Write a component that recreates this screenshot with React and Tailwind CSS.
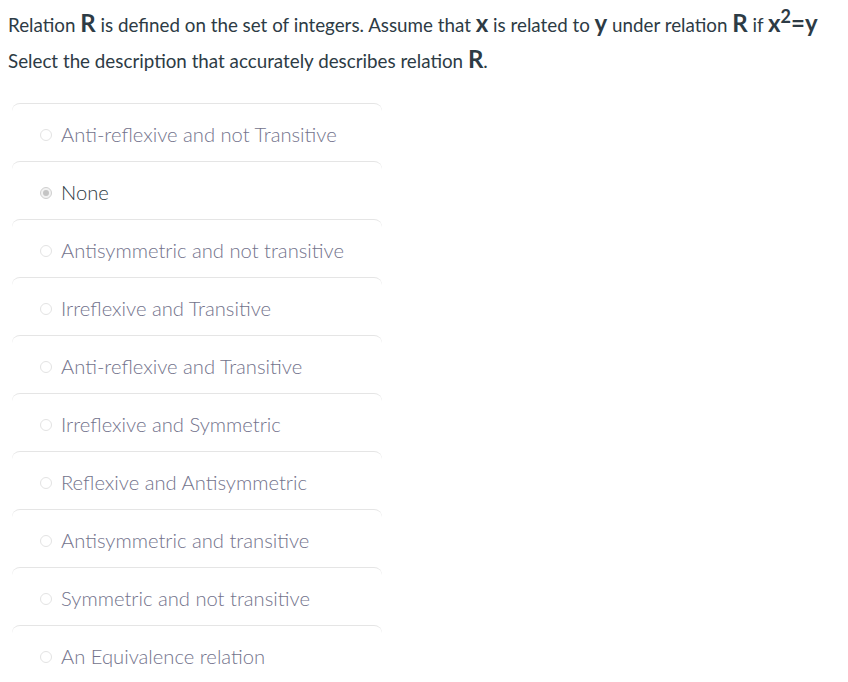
import React from 'react';

const options = [
  'Anti-reflexive and not Transitive',
  'None',
  'Antisymmetric and not transitive',
  'Irreflexive and Transitive',
  'Anti-reflexive and Transitive',
  'Irreflexive and Symmetric',
  'Reflexive and Antisymmetric',
  'Antisymmetric and transitive',
  'Symmetric and not transitive',
  'An Equivalence relation',
];

const selected = 'None';

export default function App() {
  return (
    <div className="min-h-screen bg-white font-['Lato','Noto_Sans',sans-serif] text-[#2d3b45]">
      <div className="px-[8px] pt-[9px]">
        <p className="text-[18.8px] leading-[28px]">
          Relation <b className="text-[24px]">R</b> is defined on the set of integers. Assume that{' '}
          <b className="text-[24px]">x</b> is related to <b className="text-[24px]">y</b> under relation{' '}
          <b className="text-[24px]">R</b> if{' '}
          <b className="text-[24px]">
            x<sup className="text-[18px]">2</sup>=y
          </b>
        </p>
        <p className="mt-[6px] text-[18.8px] leading-[28px]">
          Select the description that accurately describes relation <b className="text-[24px]">R</b>.
        </p>
      </div>

      <div className="ml-[12px] mt-[28px] w-[370px]">
        {options.map((opt) => {
          const on = opt === selected;
          return (
            <label
              key={opt}
              className="flex h-[58px] items-center rounded-t-lg border-t border-[#e5e5e5] pl-[28px] pt-[4px]"
            >
              <span
                className={`mr-[9px] flex h-[12px] w-[12px] items-center justify-center rounded-full border ${
                  on ? 'border-[#cfcfcf] bg-[#f2f2f2]' : 'border-[#e3e3e3] bg-white'
                }`}
              >
                {on && <span className="h-[6px] w-[6px] rounded-full bg-[#c4c4c4]" />}
              </span>
              <span className={`text-[20.2px] font-light ${on ? 'text-[#2d3b45]' : 'text-[#73738c]'}`}>{opt}</span>
            </label>
          );
        })}
      </div>
    </div>
  );
}
